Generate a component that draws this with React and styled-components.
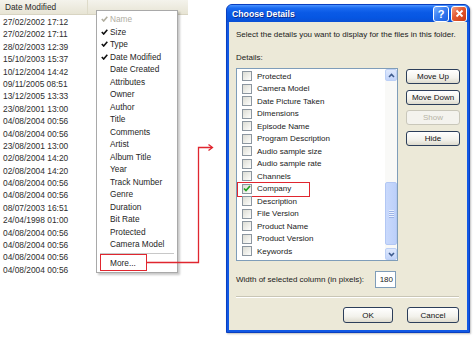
import React from 'react';
import styled, { createGlobalStyle } from 'styled-components';

const Global = createGlobalStyle`
  html, body { margin: 0; padding: 0; background: #fff; }
  body {
    font-family: "Liberation Sans", Arial, sans-serif;
    width: 474px; height: 338px; overflow: hidden;
  }
  * { box-sizing: border-box; }
`;

const Page = styled.div`
  position: relative;
  width: 474px;
  height: 338px;
  display: flex;
  align-items: flex-start;
  background: #fff;
`;

/* ---------- Explorer list on the left ---------- */
const Explorer = styled.div`
  position: relative;
  width: 226px;
  flex: none;
`;

const ColumnHeader = styled.div`
  width: 188px;
  height: 15px;
  display: flex;
  background: linear-gradient(#f4f3ec, #e7e4d4);
  border-bottom: 1px solid #d8d4c2;
`;

const HeaderCell = styled.div`
  width: 88px;
  height: 100%;
  padding-left: 5px;
  display: flex;
  align-items: center;
  font-size: 8.3px;
  color: #2a2a2a;
  border-right: 1px solid #dedbc9;
`;

const DateList = styled.div`
  padding-top: 1px;
  display: flex;
  flex-direction: column;
`;

const DateRow = styled.div`
  height: 12.4px;
  line-height: 12.4px;
  padding-left: 3px;
  font-size: 8.4px;
  color: #2e2e2e;
  white-space: nowrap;
`;

/* ---------- Context menu ---------- */
const Menu = styled.div`
  position: absolute;
  left: 96px;
  top: 10px;
  width: 82px;
  height: 263px;
  background: #fff;
  border: 1px solid #a9a9a9;
  box-shadow: 2px 2px 2px rgba(0, 0, 0, 0.22);
  padding: 2px 0;
  display: flex;
  flex-direction: column;
`;

const MenuItem = styled.div`
  position: relative;
  height: 12.5px;
  display: flex;
  align-items: center;
  font-size: 8.3px;
  color: ${p => (p.$disabled ? '#b0ad9f' : '#262626')};
  white-space: nowrap;
`;

const CheckSlot = styled.span`
  width: 9px;
  margin-left: 4px;
  display: flex;
  align-items: center;
`;

const MenuSeparator = styled.div`
  height: 6px;
  margin: 0 3px;
  display: flex;
  align-items: center;
  &::after {
    content: '';
    flex: 1;
    border-top: 1px solid #c8c8c8;
  }
`;

const Highlight = styled.div`
  position: absolute;
  left: ${p => p.$left}px;
  top: ${p => p.$top}px;
  width: ${p => p.$w}px;
  height: ${p => p.$h}px;
  border: 1.5px solid #e0262f;
  pointer-events: none;
`;

/* ---------- Dialog ---------- */
const Dialog = styled.div`
  margin-top: 4px;
  width: 244px;
  height: 329px;
  flex: none;
  display: flex;
  flex-direction: column;
  background: #1158e4;
  border: 1px solid #0a3fbf;
  border-radius: 6px 6px 0 0;
  box-shadow: 1px 1px 2px rgba(0, 0, 0, 0.25);
`;

const TitleBar = styled.div`
  height: 17px;
  flex: none;
  display: flex;
  align-items: center;
  padding: 0 2px 0 5px;
  border-radius: 5px 5px 0 0;
  background: linear-gradient(#4a94ff 0%, #1a6af0 18%, #0a5ae6 45%, #0656e2 75%, #0a4fd4 100%);
`;

const Title = styled.div`
  flex: 1;
  font-size: 8.7px;
  font-weight: bold;
  color: #fff;
  text-shadow: 1px 1px 0 #0a2a8a;
`;

const CaptionButton = styled.div`
  width: 16px;
  height: 16px;
  margin-left: 2px;
  border: 1px solid #fff;
  border-radius: 3px;
  display: flex;
  align-items: center;
  justify-content: center;
  color: #fff;
  font-weight: bold;
  font-size: 11px;
  background: ${p =>
    p.$close
      ? 'linear-gradient(135deg, #f3a184 0%, #e4582f 45%, #c93a14 100%)'
      : 'linear-gradient(135deg, #7db2ff 0%, #3a7ff2 45%, #1b5ee0 100%)'};
`;

const Body = styled.div`
  flex: 1;
  margin: 0 2px 2px;
  background: #ece9d8;
  padding: 8px 7px 0 7px;
  display: flex;
  flex-direction: column;
  font-size: 8px;
  color: #1a1a1a;
`;

const Label = styled.div`
  height: 10px;
  line-height: 10px;
  white-space: nowrap;
  margin-top: ${p => p.$mt || 0}px;
`;

const ListRow = styled.div`
  margin-top: 5px;
  display: flex;
  gap: 8px;
`;

const ListBox = styled.div`
  width: 162px;
  height: 193px;
  flex: none;
  display: flex;
  background: #fff;
  border: 1px solid #7f9db9;
`;

const Items = styled.div`
  flex: 1;
  padding-top: 1px;
  display: flex;
  flex-direction: column;
`;

const ListItem = styled.div`
  position: relative;
  height: 12.5px;
  display: flex;
  align-items: center;
  padding-left: 5px;
  gap: 5px;
  white-space: nowrap;
`;

const CheckBox = styled.span`
  width: 10px;
  height: 10px;
  flex: none;
  display: flex;
  align-items: center;
  justify-content: center;
  border: 1px solid #8c96a0;
  background: linear-gradient(135deg, #dcdcd4 0%, #f4f4f0 70%, #fff 100%);
`;

const Scrollbar = styled.div`
  width: 12px;
  flex: none;
  display: flex;
  flex-direction: column;
  background: #f9f9f7;
`;

const ScrollArrow = styled.div`
  height: 12px;
  flex: none;
  display: flex;
  align-items: center;
  justify-content: center;
  background: linear-gradient(#dfe9fd, #c2d4fa);
  border: 1px solid #bcd0f6;
  border-radius: 2px;
`;

const Track = styled.div`
  flex: 1;
  display: flex;
  flex-direction: column;
  justify-content: flex-end;
  padding-bottom: 3px;
`;

const Thumb = styled.div`
  height: 63px;
  border: 1px solid #b2c7f4;
  border-radius: 2px;
  background: linear-gradient(90deg, #c9d9fc, #bcd0fa);
  display: flex;
  flex-direction: column;
  align-items: center;
  justify-content: center;
  gap: 1px;
`;

const Grip = styled.span`
  width: 5px;
  height: 1px;
  background: #e8f0ff;
  box-shadow: 0 1px 0 #9cb3e6;
`;

const SideButtons = styled.div`
  margin-top: 1px;
  display: flex;
  flex-direction: column;
  gap: 5.7px;
`;

const Button = styled.div`
  width: ${p => p.$w || 54}px;
  height: ${p => p.$h || 15}px;
  display: flex;
  align-items: center;
  justify-content: center;
  font-size: 8px;
  border-radius: 3px;
  border: 1px solid ${p => (p.$disabled ? '#c9c7ba' : '#2c3e5a')};
  color: ${p => (p.$disabled ? '#b7b4a6' : '#111')};
  background: ${p =>
    p.$disabled ? '#f4f3ee' : 'linear-gradient(#ffffff 0%, #f3f2ec 60%, #dedbce 100%)'};
  white-space: nowrap;
`;

const WidthRow = styled.div`
  margin-top: 10px;
  height: 17px;
  display: flex;
  align-items: center;
`;

const WidthLabel = styled.div`
  width: 139px;
  white-space: nowrap;
`;

const NumberInput = styled.div`
  width: 21px;
  height: 17px;
  background: #fff;
  border: 1px solid #7f9db9;
  display: flex;
  align-items: center;
  justify-content: flex-end;
  padding-right: 2px;
`;

const Divider = styled.div`
  margin-top: 8px;
  width: 223px;
  border-top: 1px solid #c9c6b6;
  border-bottom: 1px solid #fff;
`;

const ButtonRow = styled.div`
  margin-top: 9px;
  width: 224px;
  display: flex;
  justify-content: flex-end;
  gap: 14px;
  padding-right: 1px;
`;

const Overlay = styled.svg`
  position: absolute;
  left: 0;
  top: 0;
  pointer-events: none;
`;

const dates = [
  '27/02/2002 17:12', '27/02/2002 17:11', '28/02/2003 12:39', '15/10/2003 15:37',
  '10/12/2004 14:42', '09/11/2005 08:51', '13/12/2005 13:33', '23/08/2001 13:00',
  '04/08/2004 00:56', '04/08/2004 00:56', '23/08/2001 13:00', '02/08/2004 14:20',
  '02/08/2004 14:20', '04/08/2004 00:56', '04/08/2004 00:56', '08/07/2003 16:51',
  '24/04/1998 01:00', '04/08/2004 00:56', '04/08/2004 00:56', '04/08/2004 00:56',
  '04/08/2004 00:56',
];

const menuItems = [
  { t: 'Name', c: true, d: true }, { t: 'Size', c: true }, { t: 'Type', c: true },
  { t: 'Date Modified', c: true }, { t: 'Date Created' }, { t: 'Attributes' },
  { t: 'Owner' }, { t: 'Author' }, { t: 'Title' }, { t: 'Comments' }, { t: 'Artist' },
  { t: 'Album Title' }, { t: 'Year' }, { t: 'Track Number' }, { t: 'Genre' },
  { t: 'Duration' }, { t: 'Bit Rate' }, { t: 'Protected' }, { t: 'Camera Model' },
];

const details = [
  'Protected', 'Camera Model', 'Date Picture Taken', 'Dimensions', 'Episode Name',
  'Program Description', 'Audio sample size', 'Audio sample rate', 'Channels',
  'Company', 'Description', 'File Version', 'Product Name', 'Product Version', 'Keywords',
];

const MenuCheck = ({ color }) => (
  <svg width="7" height="6" viewBox="0 0 7 6">
    <path d="M0.8 3 L2.7 5 L6.3 0.8" fill="none" stroke={color} strokeWidth="1.6" />
  </svg>
);

const GreenCheck = () => (
  <svg width="8" height="7" viewBox="0 0 8 7">
    <path d="M1 3.5 L3 5.6 L7 1" fill="none" stroke="#21a121" strokeWidth="1.7" />
  </svg>
);

const Chevron = ({ down }) => (
  <svg width="7" height="5" viewBox="0 0 7 5">
    <path
      d={down ? 'M1 1 L3.5 3.6 L6 1' : 'M1 4 L3.5 1.4 L6 4'}
      fill="none"
      stroke="#3d5a8c"
      strokeWidth="1.5"
    />
  </svg>
);

export default function App() {
  return (
    <>
      <Global />
      <Page>
        <Explorer>
          <ColumnHeader>
            <HeaderCell>Date Modified</HeaderCell>
          </ColumnHeader>
          <DateList>
            {dates.map((d, i) => (
              <DateRow key={i}>{d}</DateRow>
            ))}
          </DateList>

          <Menu>
            {menuItems.map(m => (
              <MenuItem key={m.t} $disabled={m.d}>
                <CheckSlot>{m.c && <MenuCheck color={m.d ? '#b0ad9f' : '#111'} />}</CheckSlot>
                {m.t}
              </MenuItem>
            ))}
            <MenuSeparator />
            <MenuItem>
              <CheckSlot />
              More...
              <Highlight $left={3} $top={-2.5} $w={47} $h={17} />
            </MenuItem>
          </Menu>
        </Explorer>

        <Dialog>
          <TitleBar>
            <Title>Choose Details</Title>
            <CaptionButton>?</CaptionButton>
            <CaptionButton $close>
              <svg width="9" height="9" viewBox="0 0 9 9">
                <path d="M1.5 1.5 L7.5 7.5 M7.5 1.5 L1.5 7.5" stroke="#fff" strokeWidth="1.8" />
              </svg>
            </CaptionButton>
          </TitleBar>
          <Body>
            <Label>Select the details you want to display for the files in this folder.</Label>
            <Label $mt={13}>Details:</Label>
            <ListRow>
              <ListBox>
                <Items>
                  {details.map(d => (
                    <ListItem key={d}>
                      <CheckBox>{d === 'Company' && <GreenCheck />}</CheckBox>
                      {d}
                      {d === 'Company' && <Highlight $left={0} $top={-1} $w={73} $h={15} />}
                    </ListItem>
                  ))}
                </Items>
                <Scrollbar>
                  <ScrollArrow>
                    <Chevron />
                  </ScrollArrow>
                  <Track>
                    <Thumb>
                      <Grip />
                      <Grip />
                      <Grip />
                      <Grip />
                    </Thumb>
                  </Track>
                  <ScrollArrow>
                    <Chevron down />
                  </ScrollArrow>
                </Scrollbar>
              </ListBox>
              <SideButtons>
                <Button>Move Up</Button>
                <Button>Move Down</Button>
                <Button $disabled>Show</Button>
                <Button>Hide</Button>
              </SideButtons>
            </ListRow>
            <WidthRow>
              <WidthLabel>Width of selected column (in pixels):</WidthLabel>
              <NumberInput>180</NumberInput>
            </WidthRow>
            <Divider />
            <ButtonRow>
              <Button $w={50} $h={16}>OK</Button>
              <Button $w={52} $h={16}>Cancel</Button>
            </ButtonRow>
          </Body>
        </Dialog>

        <Overlay width="474" height="338" viewBox="0 0 474 338">
          <path
            d="M147 262.5 H198.5 V147.5 H212"
            fill="none"
            stroke="#e0262f"
            strokeWidth="1.3"
          />
          <path d="M208.5 144.5 L212.5 147.5 L208.5 150.5" fill="none" stroke="#e0262f" strokeWidth="1.3" />
        </Overlay>
      </Page>
    </>
  );
}
